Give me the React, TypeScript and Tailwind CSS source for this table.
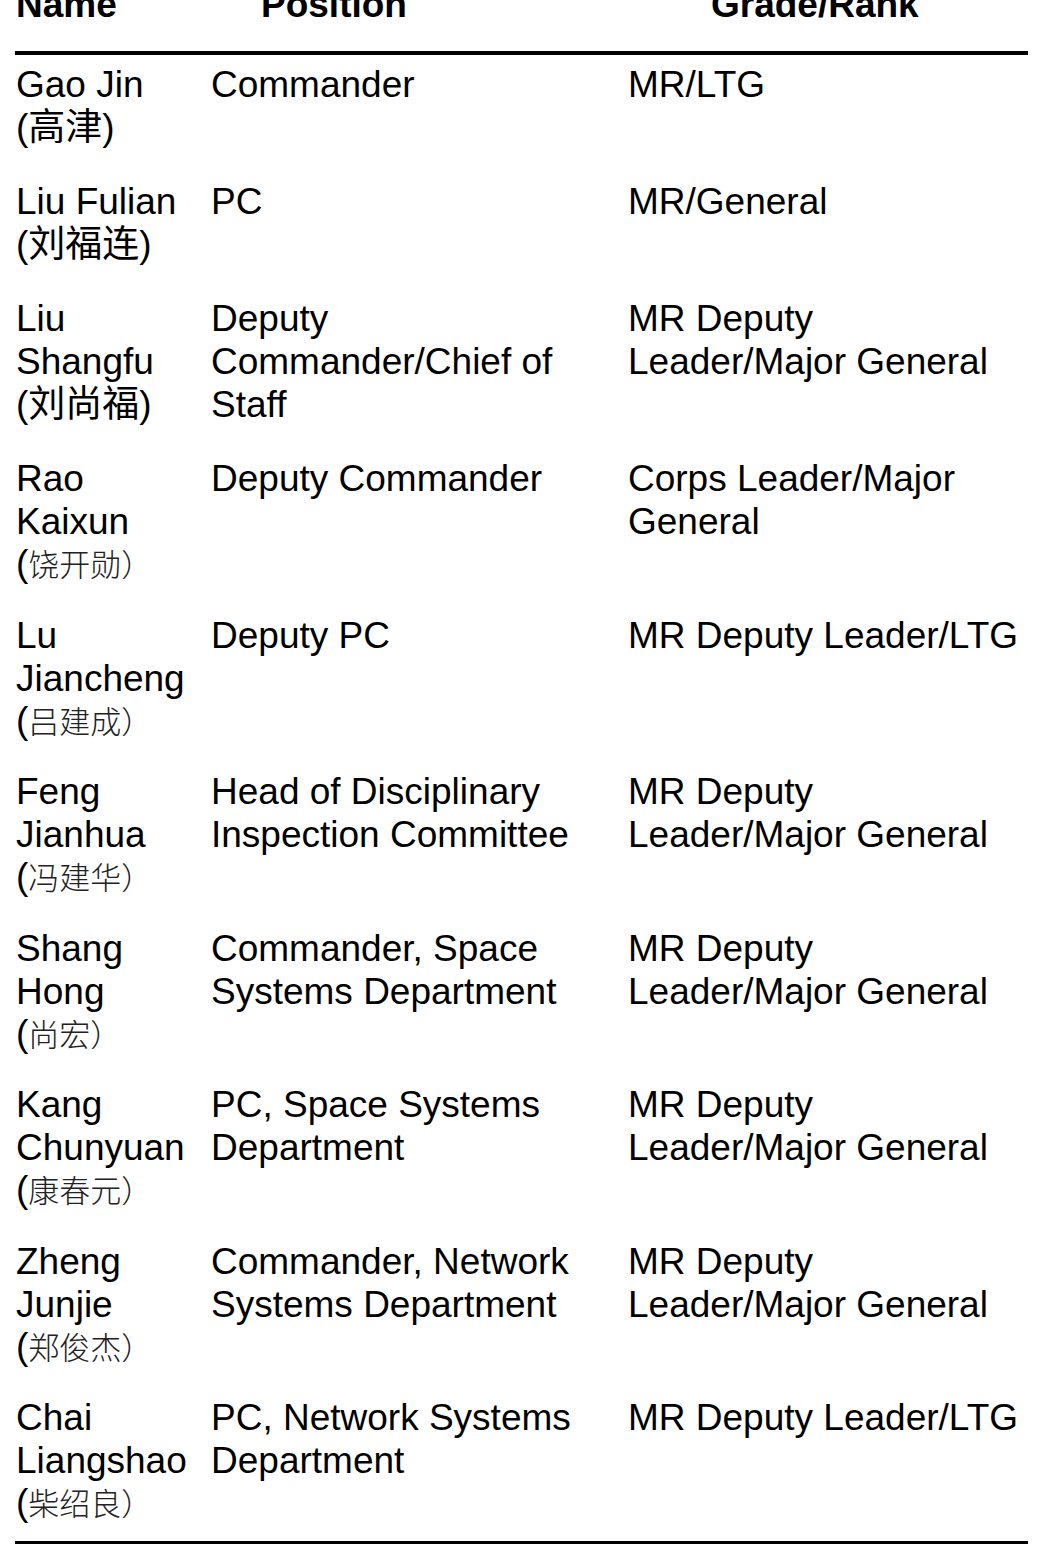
import React from 'react';

interface Officer {
  name: string[];
  cn: string;
  light?: boolean;
  position: string[];
  grade: string[];
}

const officers: Officer[] = [
  { name: ['Gao Jin'], cn: '高津', position: ['Commander'], grade: ['MR/LTG'] },
  { name: ['Liu Fulian'], cn: '刘福连', position: ['PC'], grade: ['MR/General'] },
  {
    name: ['Liu', 'Shangfu'],
    cn: '刘尚福',
    position: ['Deputy', 'Commander/Chief of', 'Staff'],
    grade: ['MR Deputy', 'Leader/Major General'],
  },
  {
    name: ['Rao', 'Kaixun'],
    cn: '饶开勋',
    light: true,
    position: ['Deputy Commander'],
    grade: ['Corps Leader/Major', 'General'],
  },
  {
    name: ['Lu', 'Jiancheng'],
    cn: '吕建成',
    light: true,
    position: ['Deputy PC'],
    grade: ['MR Deputy Leader/LTG'],
  },
  {
    name: ['Feng', 'Jianhua'],
    cn: '冯建华',
    light: true,
    position: ['Head of Disciplinary', 'Inspection Committee'],
    grade: ['MR Deputy', 'Leader/Major General'],
  },
  {
    name: ['Shang', 'Hong'],
    cn: '尚宏',
    light: true,
    position: ['Commander, Space', 'Systems Department'],
    grade: ['MR Deputy', 'Leader/Major General'],
  },
  {
    name: ['Kang', 'Chunyuan'],
    cn: '康春元',
    light: true,
    position: ['PC, Space Systems', 'Department'],
    grade: ['MR Deputy', 'Leader/Major General'],
  },
  {
    name: ['Zheng', 'Junjie'],
    cn: '郑俊杰',
    light: true,
    position: ['Commander, Network', 'Systems Department'],
    grade: ['MR Deputy', 'Leader/Major General'],
  },
  {
    name: ['Chai', 'Liangshao'],
    cn: '柴绍良',
    light: true,
    position: ['PC, Network Systems', 'Department'],
    grade: ['MR Deputy Leader/LTG'],
  },
];

const Lines = ({ lines }: { lines: string[] }) => (
  <>
    {lines.map((l) => (
      <div key={l} className="whitespace-nowrap">
        {l}
      </div>
    ))}
  </>
);

export default function App() {
  return (
    <div
      className="bg-white text-black text-[37px] leading-[43px] min-h-[1554px] overflow-hidden"
      style={{ fontFamily: '"Liberation Sans", Arial, "Noto Sans CJK SC", sans-serif' }}
    >
      <div className="ml-[15px] w-[1013px] border-b-[3px] border-black">
        {/* Header (top is cropped in the source) */}
        <div className="grid grid-cols-[196px_417px_1fr] -mt-[17px] pb-[25px] border-b-[4px] border-black font-bold">
          <div className="pl-[1px]">Name</div>
          <div className="pl-[50px]">Position</div>
          <div className="pl-[83px]">Grade/Rank</div>
        </div>

        {/* Rows */}
        {officers.map((o, i) => (
          <div
            key={o.cn}
            className={`grid grid-cols-[196px_417px_1fr] pt-[8px] ${
              i === officers.length - 1 ? 'pb-[19px]' : 'pb-[23px]'
            }`}
          >
            <div className="pl-[1px]">
              <Lines lines={o.name} />
              {o.light ? (
                <div className="whitespace-nowrap h-[39.5px] leading-[39.5px]">
                  (
                  <span
                    className="text-[31px] font-light text-[#222]"
                    style={{ fontFamily: '"Noto Sans CJK SC", sans-serif' }}
                  >
                    {o.cn}）
                  </span>
                </div>
              ) : (
                <div className="whitespace-nowrap">({o.cn})</div>
              )}
            </div>
            <div>
              <Lines lines={o.position} />
            </div>
            <div>
              <Lines lines={o.grade} />
            </div>
          </div>
        ))}
      </div>
    </div>
  );
}
